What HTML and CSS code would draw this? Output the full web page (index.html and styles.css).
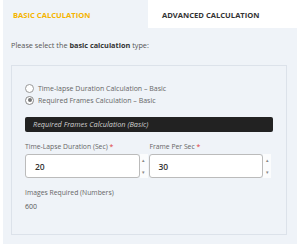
FILE: index.html
```html
<!DOCTYPE html>
<html lang="en">
<head>
    <meta charset="UTF-8">
    <title>Time-lapse Calculator</title>
    <link rel="stylesheet" href="styles.css">
</head>
<body>
    <div class="calc">
        <div class="tabs">
            <div class="tab active">BASIC CALCULATION</div>
            <div class="tab">ADVANCED CALCULATION</div>
        </div>
        <div class="panel">
            <p class="intro">Please select the <b>basic calculation</b> type:</p>
            <div class="box">
                <div class="radio"><span class="dot"></span>Time-lapse Duration Calculation – Basic</div>
                <div class="radio"><span class="dot checked"></span>Required Frames Calculation – Basic</div>

                <div class="banner">Required Frames Calculation (Basic)</div>

                <div class="fields">
                    <div class="field">
                        <div class="lbl">Time-Lapse Duration (Sec) <span class="req">*</span></div>
                        <div class="num">
                            <div class="val">20</div>
                            <div class="spin"><span>&#9652;</span><span>&#9662;</span></div>
                        </div>
                    </div>
                    <div class="field">
                        <div class="lbl">Frame Per Sec <span class="req">*</span></div>
                        <div class="num">
                            <div class="val">30</div>
                            <div class="spin"><span>&#9652;</span><span>&#9662;</span></div>
                        </div>
                    </div>
                </div>

                <div class="lbl result-lbl">Images Required (Numbers)</div>
                <div class="out">600</div>
            </div>
        </div>
    </div>
</body>
</html>
```

FILE: styles.css
```css
body {
    margin: 0;
    background: #ffffff;
    font-family: 'Open Sans', Arial, sans-serif;
    font-size: 7px;
    color: #666;
}

.calc {
    width: 294px;
    margin-left: 3px;
}

.tabs {
    display: flex;
    height: 28px;
}

.tab {
    flex: 1;
    display: flex;
    align-items: center;
    padding: 2px 0 0 10px;
    box-sizing: border-box;
    font-weight: 700;
    font-size: 7.6px;
    color: #333;
    background: #fff;
}

.tab.active {
    color: #f5b400;
    background: #eff3f8;
}

.tab + .tab {
    padding-left: 14px;
}

.panel {
    background: #eff3f8;
    padding: 11px 10px 9px 8px;
}

.intro {
    margin: 0 0 14px 0;
    line-height: 12px;
    font-size: 7.3px;
    color: #555;
}

.intro b {
    color: #333;
}

.box {
    border: 1px solid #dce2ea;
    padding: 16px 13px 22px 13px;
}

.radio {
    display: flex;
    align-items: center;
    height: 12px;
    color: #666;
}

.dot {
    width: 9px;
    height: 9px;
    border: 1px solid #999;
    border-radius: 50%;
    background: #fff;
    margin-right: 4px;
    box-sizing: border-box;
    position: relative;
}

.dot.checked {
    border-color: #888;
}

.dot.checked::after {
    content: '';
    position: absolute;
    left: 1.5px;
    top: 1.5px;
    width: 4px;
    height: 4px;
    border-radius: 50%;
    background: #777;
}

.banner {
    margin: 11px 0 0 0;
    height: 15px;
    line-height: 15px;
    width: 248px;
    background: #222;
    color: #d0d0d0;
    font-style: italic;
    font-size: 7.3px;
    padding-left: 8px;
    box-sizing: border-box;
    border-radius: 2px;
}

.fields {
    display: flex;
    gap: 1px;
    margin-top: 10px;
    width: 246px;
}

.field {
    flex: 1;
}

.field + .field .lbl {
    padding-left: 1px;
}

.lbl {
    line-height: 10px;
    font-size: 6.8px;
    color: #666;
}

.req {
    color: #e03a3a;
}

.num {
    display: flex;
    margin-top: 2px;
    height: 24px;
}

.val {
    flex: 1;
    border: 1px solid #bbb;
    border-radius: 3px;
    background: #fff;
    display: flex;
    align-items: center;
    padding-left: 9px;
    font-weight: 600;
    font-size: 8.5px;
    color: #333;
}

.spin {
    width: 8px;
    background: #fbfcfd;
    display: flex;
    flex-direction: column;
    align-items: center;
    justify-content: space-between;
    padding: 2px 0;
    font-size: 5px;
    line-height: 8px;
    color: #888;
}

.result-lbl {
    margin-top: 10px;
}

.out {
    margin-top: 4px;
    line-height: 10px;
    color: #555;
}
```
